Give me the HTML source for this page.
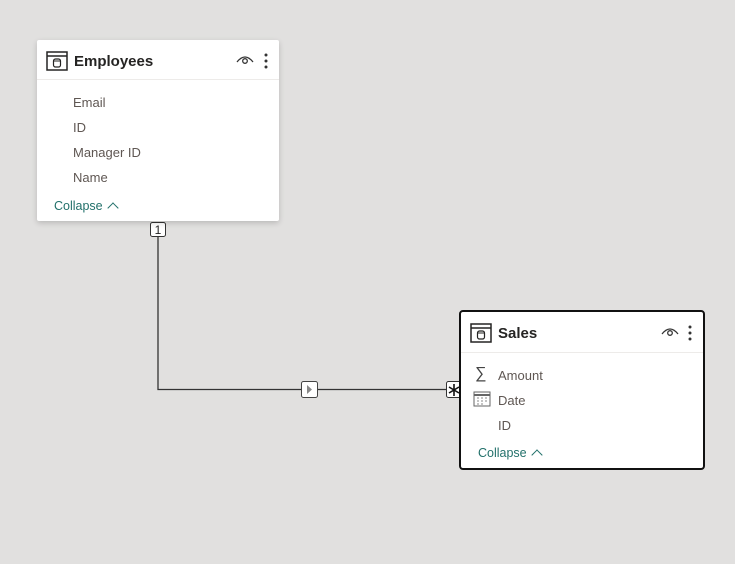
<!DOCTYPE html>
<html><head><style>
body{margin:0;width:735px;height:564px;background:#e1e0df;font-family:"Liberation Sans",sans-serif;position:relative;overflow:hidden}
.card{position:absolute;background:#fff;box-sizing:border-box}
.hd{position:absolute;left:0;right:0;top:0;border-bottom:1px solid #edebe9}
.t{position:absolute;font-size:15px;font-weight:bold;color:#252423}
.f{position:absolute;font-size:13px;color:#5f5753}
.c{position:absolute;font-size:12.5px;color:#23716b}
.ab{position:absolute}
</style></head><body>
<svg class="ab" style="left:0;top:0" width="735" height="564">
<path d="M158 222 V389.5 H447" fill="none" stroke="#333" stroke-width="1.3"/>
<rect x="150.5" y="222.5" width="15" height="14" rx="2" fill="#fff" stroke="#333"/>
<text x="158" y="234" font-size="12" text-anchor="middle" font-family="Liberation Sans" fill="#222">1</text>
<rect x="301.5" y="381.5" width="16" height="16" rx="2" fill="#fff" stroke="#444"/>
<path d="M307 385 L312 389.5 L307 394Z" fill="#888"/>
<rect x="446.5" y="381.5" width="15" height="16" rx="2" fill="#fff" stroke="#333"/>
<path d="M454 384 V396 M449 387 L459 393 M459 387 L449 393" stroke="#111" stroke-width="1.6"/>
</svg>
<div class="card" style="left:37px;top:40px;width:242px;height:181px;box-shadow:0 2px 6px rgba(0,0,0,.18);border-radius:2px">
 <div class="hd" style="height:39px"></div>
 <svg class="ab" style="left:9px;top:11px" width="22" height="20"><rect x="1" y="1" width="20" height="18" fill="none" stroke="#252423" stroke-width="1.5"/><line x1="1" y1="5" x2="21" y2="5" stroke="#252423" stroke-width="1.5"/><rect x="7.5" y="8" width="7" height="8" rx="2" fill="none" stroke="#252423" stroke-width="1.2"/><line x1="7.5" y1="10" x2="14.5" y2="10" stroke="#252423"/></svg>
 <div class="t" style="left:37px;top:13px">Employees</div>
 <svg class="ab" style="left:199px;top:14px" width="20" height="12"><path d="M1 8 Q9 -2 17 8" fill="none" stroke="#333" stroke-width="1.3"/><circle cx="9" cy="7" r="2.3" fill="none" stroke="#333" stroke-width="1.3"/></svg>
 <svg class="ab" style="left:227px;top:13px" width="4" height="16"><circle cx="2" cy="2" r="1.5" fill="#333"/><circle cx="2" cy="8" r="1.5" fill="#333"/><circle cx="2" cy="14" r="1.5" fill="#333"/></svg>
 <div class="f" style="left:36px;top:55px">Email</div>
 <div class="f" style="left:36px;top:80px">ID</div>
 <div class="f" style="left:36px;top:105px">Manager ID</div>
 <div class="f" style="left:36px;top:130px">Name</div>
 <div class="c" style="left:17px;top:159px">Collapse <span style="display:inline-block;width:7px;height:7px;border-left:1.3px solid #23716b;border-top:1.3px solid #23716b;transform:rotate(45deg);margin-left:3px;position:relative;top:2px"></span></div>
</div>
<div class="card" style="left:459px;top:310px;width:246px;height:160px;border:2px solid #111;border-radius:4px">
 <div class="hd" style="height:40px"></div>
 <svg class="ab" style="left:9px;top:11px" width="22" height="20"><rect x="1" y="1" width="20" height="18" fill="none" stroke="#252423" stroke-width="1.5"/><line x1="1" y1="5" x2="21" y2="5" stroke="#252423" stroke-width="1.5"/><rect x="7.5" y="8" width="7" height="8" rx="2" fill="none" stroke="#252423" stroke-width="1.2"/><line x1="7.5" y1="10" x2="14.5" y2="10" stroke="#252423"/></svg>
 <div class="t" style="left:37px;top:13px">Sales</div>
 <svg class="ab" style="left:200px;top:14px" width="20" height="12"><path d="M1 8 Q9 -2 17 8" fill="none" stroke="#333" stroke-width="1.3"/><circle cx="9" cy="7" r="2.3" fill="none" stroke="#333" stroke-width="1.3"/></svg>
 <svg class="ab" style="left:227px;top:13px" width="4" height="16"><circle cx="2" cy="2" r="1.5" fill="#333"/><circle cx="2" cy="8" r="1.5" fill="#333"/><circle cx="2" cy="14" r="1.5" fill="#333"/></svg>
 <div class="f" style="left:14px;top:53px;font-size:16px;color:#444">∑</div>
 <div class="f" style="left:37px;top:56px">Amount</div>
 <svg class="ab" style="left:12px;top:79px" width="18" height="16"><rect x="1" y="1" width="16" height="14" fill="none" stroke="#666"/><line x1="1" y1="4" x2="17" y2="4" stroke="#666" stroke-width="2"/><path d="M4 7h2M8 7h2M12 7h2M4 10h2M8 10h2M12 10h2M4 13h2M8 13h2" stroke="#888"/></svg>
 <div class="f" style="left:37px;top:81px">Date</div>
 <div class="f" style="left:37px;top:106px">ID</div>
 <div class="c" style="left:17px;top:134px">Collapse <span style="display:inline-block;width:7px;height:7px;border-left:1.3px solid #23716b;border-top:1.3px solid #23716b;transform:rotate(45deg);margin-left:3px;position:relative;top:2px"></span></div>
</div>
</body></html>
